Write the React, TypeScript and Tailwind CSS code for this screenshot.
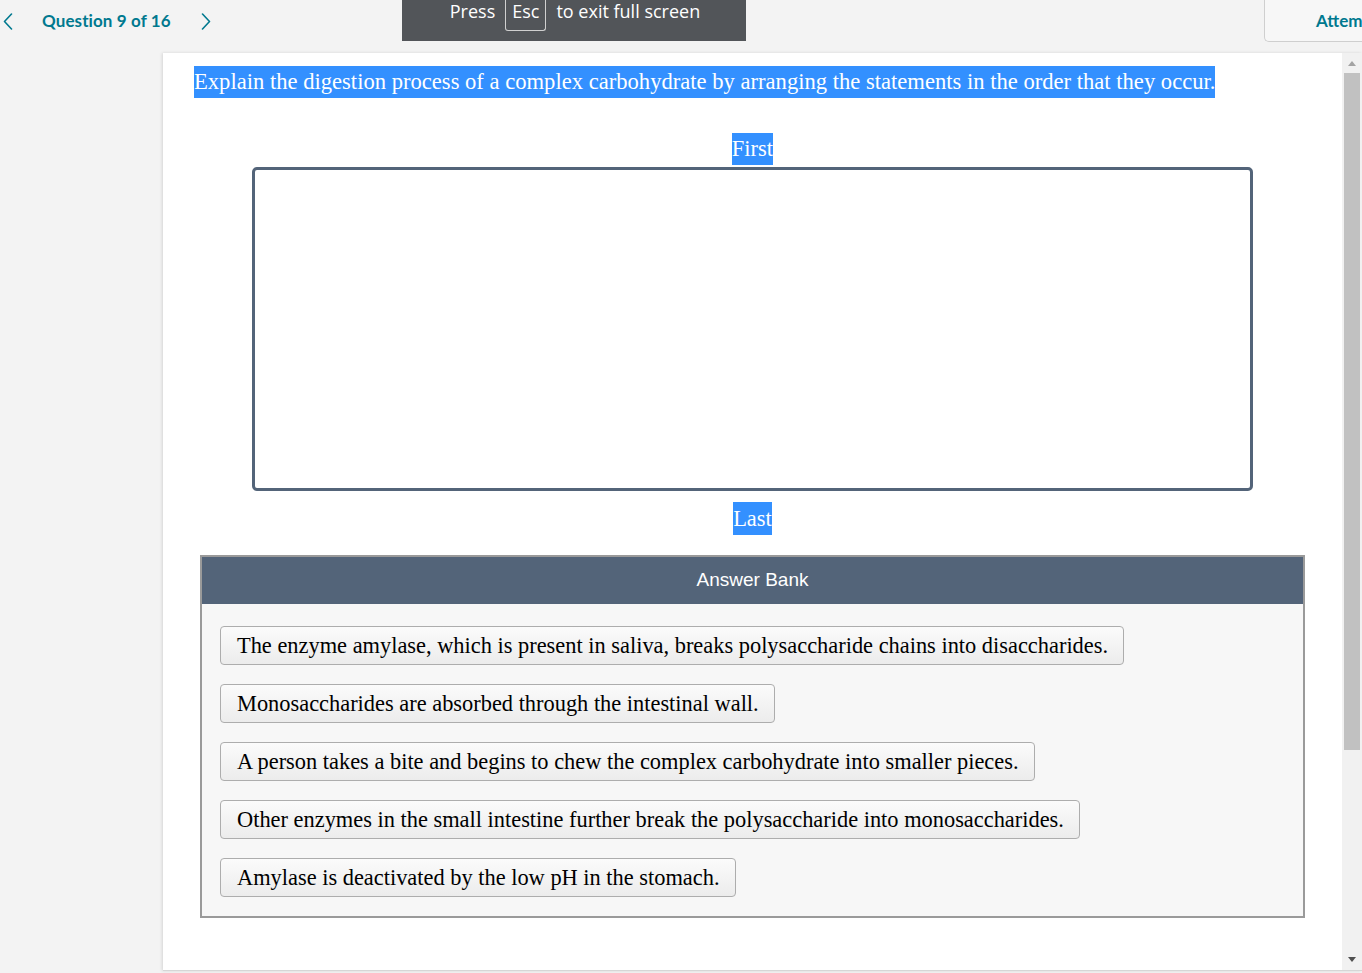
const STATEMENTS = [
  'The enzyme amylase, which is present in saliva, breaks polysaccharide chains into disaccharides.',
  'Monosaccharides are absorbed through the intestinal wall.',
  'A person takes a bite and begins to chew the complex carbohydrate into smaller pieces.',
  'Other enzymes in the small intestine further break the polysaccharide into monosaccharides.',
  'Amylase is deactivated by the low pH in the stomach.',
];

function Chevron({ dir }: { dir: 'left' | 'right' }) {
  return (
    <svg width="10" height="17" viewBox="0 0 10 17" fill="none" stroke="currentColor" strokeWidth="1.6" strokeLinecap="round" strokeLinejoin="round">
      {dir === 'left' ? <polyline points="8.5,1 1.5,8.5 8.5,16" /> : <polyline points="1.5,1 8.5,8.5 1.5,16" />}
    </svg>
  );
}

export default function App() {
  return (
    <div className="relative h-[973px] w-[1362px] overflow-hidden bg-[#f3f3f3]">
      {/* Top bar */}
      <div className="flex h-[53px] items-start">
        <div className="flex h-[42px] items-center text-[#00798f]">
          <span className="ml-[3px]"><Chevron dir="left" /></span>
          <span className="ml-[29px] font-['Lato',sans-serif] text-[17px] font-bold tracking-[0.1px]">Question 9 of 16</span>
          <span className="ml-[30px]"><Chevron dir="right" /></span>
        </div>
        <div className="ml-auto flex h-[42px] w-[98px] items-center rounded-bl-[5px] border border-r-0 border-t-0 border-[#cfcfcf] bg-[#f7f7f7] pl-[51px] font-['Lato',sans-serif] text-[17px] font-bold text-[#00798f]">
          <span className="whitespace-nowrap">Attempt</span>
        </div>
      </div>

      {/* Full screen notice */}
      <div className="absolute left-[402px] top-0 flex h-[41px] w-[344px] items-start justify-center gap-[10px] bg-[#525559] pl-[2px] font-['Open_Sans',sans-serif] text-[18px] leading-[21px] text-white">
        <span className="pt-[1px]">Press</span>
        <span className="flex h-[31px] items-start rounded-b-[3px] border border-t-0 border-[#d0d0d0] px-[6px] pt-[1px]">Esc</span>
        <span className="pt-[1px]">to exit full screen</span>
      </div>

      {/* Panel */}
      <div className="ml-[163px] flex h-[918px] w-[1199px] border-b border-[#d6d6d6] bg-white shadow-[-1px_0_3px_rgba(0,0,0,0.12)]">
        <div className="flex flex-1 flex-col items-center pt-[13px]">
          <div className="w-full pl-[31px]">
            <span className="inline-block bg-[#3390ff] font-['Liberation_Serif',serif] text-[22.6px] leading-[32px] text-white">
              Explain the digestion process of a complex carbohydrate by arranging the statements in the order that they occur.
            </span>
          </div>

          <div className="mt-[35px] bg-[#3390ff] font-['Liberation_Serif',serif] text-[22.5px] leading-[32px] text-white">First</div>
          <div className="mt-[2px] h-[324px] w-[1001px] rounded-[5px] border-[3px] border-[#536479] bg-white" />
          <div className="mt-[11px] bg-[#3390ff] font-['Liberation_Serif',serif] text-[22.5px] leading-[33px] text-white">Last</div>

          <div className="mt-[20px] w-[1105px] border-2 border-[#9a9a9a] bg-[#f7f7f7]">
            <div className="flex h-[47px] items-center justify-center bg-[#536479] font-['Liberation_Sans',sans-serif] text-[19px] text-white">
              Answer Bank
            </div>
            <div className="flex flex-col items-start gap-[19px] px-[18px] pb-[19px] pt-[22px]">
              {STATEMENTS.map(s => (
                <div
                  key={s}
                  className="flex h-[39px] items-center rounded-[4px] border border-[#adadad] bg-gradient-to-b from-[#fbfbfb] to-[#ececec] pl-[16px] pr-[15px] font-['Liberation_Serif',serif] text-[22.4px] text-black"
                >
                  {s}
                </div>
              ))}
            </div>
          </div>
        </div>

        {/* Scrollbar */}
        <div className="flex w-[20px] flex-col items-center bg-[#f1f1f1]">
          <div className="flex h-[20px] items-center justify-center">
            <div className="h-0 w-0 border-x-[4px] border-b-[5px] border-x-transparent border-b-[#a3a3a3]" />
          </div>
          <div className="h-[677px] w-[16px] bg-[#c1c1c1]" />
          <div className="flex-1" />
          <div className="flex h-[22px] items-center justify-center">
            <div className="h-0 w-0 border-x-[4px] border-t-[5px] border-x-transparent border-t-[#505050]" />
          </div>
        </div>
      </div>
    </div>
  );
}
